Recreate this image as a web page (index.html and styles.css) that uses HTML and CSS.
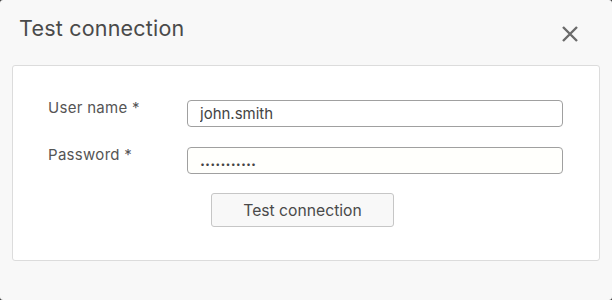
FILE: index.html
```html
<!DOCTYPE html>
<html lang="en">
<head>
<meta charset="utf-8">
<title>Test connection</title>
<link rel="stylesheet" href="styles.css">
</head>
<body>
<div class="dialog">
  <header class="dialog-header">
    <h1 class="dialog-title">Test connection</h1>
    <button class="close-btn" aria-label="Close">
      <svg width="18" height="18" viewBox="0 0 18 18" aria-hidden="true"><path d="M2 2 L16 16 M16 2 L2 16" stroke="#6b6b6b" stroke-width="2.4" stroke-linecap="butt" fill="none"/></svg>
    </button>
  </header>
  <section class="panel">
    <form class="form">
      <label class="label" for="user">User name *</label>
      <input class="field" id="user" type="text" value="john.smith">
      <label class="label" for="pass">Password *</label>
      <input class="field field-pass" id="pass" type="text" value="...........">
      <div class="actions">
        <button type="button" class="btn">Test connection</button>
      </div>
    </form>
  </section>
</div>
</body>
</html>
```

FILE: styles.css
```css
* { box-sizing: border-box; }
html, body { margin: 0; padding: 0; }
body {
  background: #3a3a3a;
  font-family: Inter, Roboto, "Liberation Sans", sans-serif;
  width: 612px;
  height: 300px;
}
.dialog {
  width: 612px;
  height: 300px;
  background: #f8f8f8;
  border-radius: 3px;
  display: flex;
  flex-direction: column;
}
.dialog-header {
  height: 65px;
  display: flex;
  align-items: flex-start;
  justify-content: space-between;
  padding: 0 33px 0 19px;
}
.dialog-title {
  margin: 15px 0 0;
  font-size: 21.5px;
  font-weight: 400;
  color: #4a4a4a;
  letter-spacing: 0.2px;
}
.close-btn {
  margin-top: 25px;
  padding: 0;
  border: 0;
  background: none;
  width: 18px;
  height: 18px;
  display: flex;
}
.panel {
  margin: 0 12px;
  height: 196px;
  background: #fff;
  border: 1px solid #dcdcdc;
  border-radius: 3px;
  padding: 34px 36px 0 35px;
}
.form {
  display: grid;
  grid-template-columns: 139px 1fr;
  row-gap: 20px;
  align-items: start;
}
.label {
  font-size: 15px;
  letter-spacing: 0.3px;
  color: #555;
  line-height: 18px;
  margin-top: -1px;
}
.field {
  height: 27px;
  width: 100%;
  border: 1px solid #a0a0a0;
  border-radius: 4px;
  padding: 0 12px;
  font-family: inherit;
  font-size: 15px;
  color: #444;
  background: #fff;
}
.field-pass {
  font-weight: 700;
  letter-spacing: 0.1px;
  background: #fffffc;
}
.actions {
  grid-column: 1 / -1;
  display: flex;
  justify-content: center;
  margin-top: -1px;
  padding-right: 6px;
}
.btn {
  width: 183px;
  height: 34px;
  border: 1px solid #c6c6c6;
  border-radius: 3px;
  background: #f8f8f8;
  font-family: inherit;
  font-size: 15.7px;
  color: #4a4a4a;
  padding: 0;
}
```
